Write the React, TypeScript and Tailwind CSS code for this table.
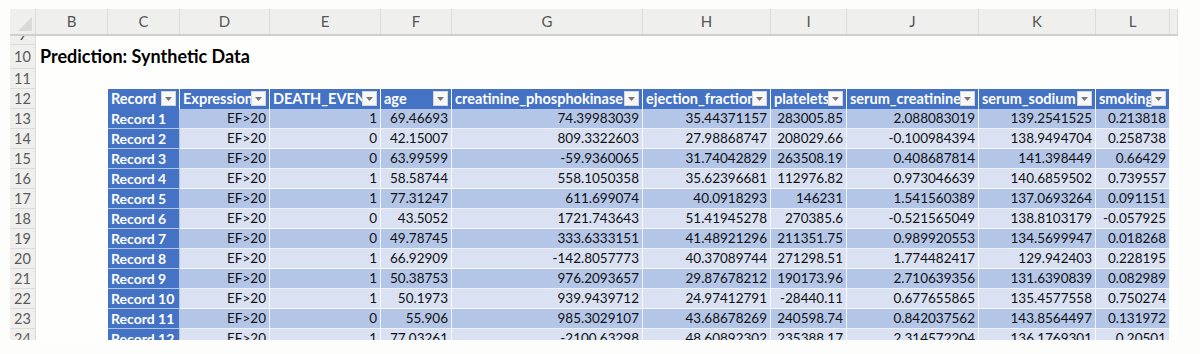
import React from "react";

// column widths: row header, B, C ... L, M (partial)
const widths = [
  "w-[26px]",
  "w-[72px]",
  "w-[72px]",
  "w-[90px]",
  "w-[111px]",
  "w-[71px]",
  "w-[191px]",
  "w-[128px]",
  "w-[76px]",
  "w-[132px]",
  "w-[117px]",
  "w-[74px]",
  "w-[8px]",
];

const letters = ["B", "C", "D", "E", "F", "G", "H", "I", "J", "K", "L", ""];

const headers = [
  "Record",
  "Expression",
  "DEATH_EVENT",
  "age",
  "creatinine_phosphokinase",
  "ejection_fraction",
  "platelets",
  "serum_creatinine",
  "serum_sodium",
  "smoking",
];

const rows: string[][] = [
  ["Record 1", "EF>20", "1", "69.46693", "74.39983039", "35.44371157", "283005.85", "2.088083019", "139.2541525", "0.213818"],
  ["Record 2", "EF>20", "0", "42.15007", "809.3322603", "27.98868747", "208029.66", "-0.100984394", "138.9494704", "0.258738"],
  ["Record 3", "EF>20", "0", "63.99599", "-59.9360065", "31.74042829", "263508.19", "0.408687814", "141.398449", "0.66429"],
  ["Record 4", "EF>20", "1", "58.58744", "558.1050358", "35.62396681", "112976.82", "0.973046639", "140.6859502", "0.739557"],
  ["Record 5", "EF>20", "1", "77.31247", "611.699074", "40.0918293", "146231", "1.541560389", "137.0693264", "0.091151"],
  ["Record 6", "EF>20", "0", "43.5052", "1721.743643", "51.41945278", "270385.6", "-0.521565049", "138.8103179", "-0.057925"],
  ["Record 7", "EF>20", "0", "49.78745", "333.6333151", "41.48921296", "211351.75", "0.989920553", "134.5699947", "0.018268"],
  ["Record 8", "EF>20", "1", "66.92909", "-142.8057773", "40.37089744", "271298.51", "1.774482417", "129.942403", "0.228195"],
  ["Record 9", "EF>20", "1", "50.38753", "976.2093657", "29.87678212", "190173.96", "2.710639356", "131.6390839", "0.082989"],
  ["Record 10", "EF>20", "1", "50.1973", "939.9439712", "24.97412791", "-28440.11", "0.677655865", "135.4577558", "0.750274"],
  ["Record 11", "EF>20", "0", "55.906", "985.3029107", "43.68678269", "240598.74", "0.842037562", "143.8564497", "0.131972"],
  ["Record 12", "EF>20", "1", "77.03261", "-2100.63298", "48.60892302", "235388.17", "2.314572204", "136.1769301", "0.20501"],
];

function RowNum({ n, h }: { n: number; h: string }) {
  return (
    <div
      className={`${widths[0]} ${h} shrink-0 flex items-center justify-center bg-[#efefed] border-r border-b border-[#dcdcda] text-[14.5px] text-[#5a5a5a]`}
    >
      {n}
    </div>
  );
}

function Empty({ i, h }: { i: number; h: string }) {
  return <div className={`${widths[i]} ${h} shrink-0`} />;
}

function FilterButton() {
  return (
    <div className="absolute right-[3px] top-[2px] w-[15px] h-[15px] bg-[#f8f8f8] border border-[#d6d6d6] flex items-center justify-center">
      <svg width="7" height="4" viewBox="0 0 7 4">
        <path d="M0 0 L7 0 L3.5 4 Z" fill="#777" />
      </svg>
    </div>
  );
}

export default function App() {
  return (
    <div
      className="w-[1200px] h-[354px] bg-[#fdfdfb] pt-[9px] pl-[10px] overflow-hidden"
      style={{ fontFamily: "Lato, 'Open Sans', sans-serif" }}
    >
      <div className="w-[1168px] h-[331px] overflow-hidden bg-[#fefefd] flex flex-col">
        {/* ===== COLUMN LETTERS ===== */}
        <div className="flex h-[27px] shrink-0 bg-[#efefed] border-b-2 border-[#cfcfcd]">
          <div className={`${widths[0]} shrink-0 h-full relative border-r border-[#dcdcda]`}>
            <svg className="absolute right-[3px] bottom-[3px]" width="14" height="14" viewBox="0 0 14 14">
              <path d="M14 0 L14 14 L0 14 Z" fill="#dadad8" />
            </svg>
          </div>
          {letters.map((l, i) => (
            <div
              key={i}
              className={`${widths[i + 1]} shrink-0 h-full flex items-center justify-center text-[15px] text-[#555] border-r border-[#dcdcda]`}
            >
              {l}
            </div>
          ))}
        </div>

        {/* ===== SHEET BODY ===== */}
        <div className="flex-1 overflow-hidden">
          <div className="-mt-[11px]">
            {/* row 9 */}
            <div className="flex">
              <RowNum n={9} h="h-[20px]" />
            </div>

            {/* row 10 - title */}
            <div className="flex">
              <RowNum n={10} h="h-[24px]" />
              <div className={`${widths[1]} h-[24px] shrink-0 flex items-end pl-[4px] pb-[4px]`}>
                <span className="whitespace-nowrap font-bold text-[18px] text-black leading-none">
                  Prediction: Synthetic Data
                </span>
              </div>
            </div>

            {/* row 11 */}
            <div className="flex">
              <RowNum n={11} h="h-[20px]" />
            </div>

            {/* row 12 - table header */}
            <div className="flex">
              <RowNum n={12} h="h-[20px]" />
              <Empty i={1} h="h-[20px]" />
              {headers.map((t, i) => (
                <div
                  key={t}
                  className={`${widths[i + 2]} h-[20px] shrink-0 relative overflow-hidden bg-[#4472c4] border-r border-white text-white font-bold text-[14.5px] leading-[20px] pl-[3px] whitespace-nowrap`}
                >
                  {t}
                  <FilterButton />
                </div>
              ))}
            </div>

            {/* data rows */}
            {rows.map((r, ri) => (
              <div key={ri} className="flex">
                <RowNum n={13 + ri} h="h-[20px]" />
                <Empty i={1} h="h-[20px]" />
                {r.map((v, ci) =>
                  ci === 0 ? (
                    <div
                      key={ci}
                      className={`${widths[2]} h-[20px] shrink-0 bg-[#4472c4] border-r border-b border-white/60 text-white font-bold text-[14px] leading-[19px] pl-[3px] whitespace-nowrap overflow-hidden`}
                    >
                      {v}
                    </div>
                  ) : (
                    <div
                      key={ci}
                      className={`${widths[ci + 2]} h-[20px] shrink-0 border-r border-b border-white/80 text-[13.5px] leading-[19px] pr-[3px] text-right text-[#111] whitespace-nowrap overflow-hidden ${
                        ri % 2 === 0 ? "bg-[#b4c6e7]" : "bg-[#d9e1f2]"
                      }`}
                    >
                      {v}
                    </div>
                  )
                )}
              </div>
            ))}
          </div>
        </div>
      </div>
    </div>
  );
}
